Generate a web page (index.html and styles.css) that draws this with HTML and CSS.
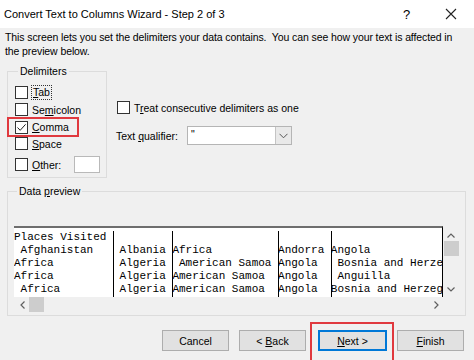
FILE: index.html
```html
<!DOCTYPE html>
<html lang="en">
<head>
  <meta charset="UTF-8" />
  <title>Convert Text to Columns Wizard - Step 2 of 3</title>
  <link rel="stylesheet" href="styles.css">
</head>
<body>

  <div class="window">
    <!-- Title bar -->
    <div class="titlebar">
      <span class="title">Convert Text to Columns Wizard - Step 2 of 3</span>
      <span class="help">?</span>
      <span class="close">
        <svg width="12" height="12" viewBox="0 0 12 12"><path d="M1 1 L11 11 M11 1 L1 11" stroke="#222" stroke-width="1.1" fill="none"/></svg>
      </span>
    </div>

    <div class="content">
      <p class="intro">This screen lets you set the delimiters your data contains.&nbsp; You can see how your text is affected in<br>the preview below.</p>

      <div class="options">
        <fieldset class="group delimiters">
          <legend>Delimiters</legend>
          <label class="check"><span class="box"></span><span class="focus"><u>T</u>ab</span></label>
          <label class="check"><span class="box"></span><span>Se<u>m</u>icolon</span></label>
          <div class="highlight">
            <label class="check"><span class="box"><svg width="11" height="11" viewBox="0 0 11 11"><path d="M1.5 5.5 L4.2 8.3 L9.6 2.3" stroke="#222" stroke-width="1" fill="none"/></svg></span><span><u>C</u>omma</span></label>
          </div>
          <label class="check"><span class="box"></span><span><u>S</u>pace</span></label>
          <div class="check other">
            <span class="box"></span><span class="other-label"><u>O</u>ther:</span>
            <span class="other-input"></span>
          </div>
        </fieldset>

        <div class="side">
          <label class="check"><span class="box"></span><span>T<u>r</u>eat consecutive delimiters as one</span></label>
          <div class="qualifier">
            <span>Text <u>q</u>ualifier:</span>
            <div class="combo">
              <span class="combo-value">"</span>
              <span class="combo-btn">
                <svg width="9" height="6" viewBox="0 0 9 6"><path d="M0.5 0.8 L4.5 4.8 L8.5 0.8" stroke="#555" stroke-width="1" fill="none"/></svg>
              </span>
            </div>
          </div>
        </div>
      </div>

      <fieldset class="group preview-group">
        <legend>Data <u>p</u>review</legend>
        <div class="preview">
          <div class="preview-row">
            <div class="grid">
              <div class="col c1">Places Visited
 Afghanistan
Africa
Africa
 Africa</div>
              <div class="col c2">
 Albania
 Algeria
 Algeria
 Algeria</div>
              <div class="col c3">
Africa
 American Samoa
American Samoa
American Samoa</div>
              <div class="col c4">
Andorra
Angola
Angola
Angola</div>
              <div class="col c5">
Angola
 Bosnia and Herzegovina
 Anguilla
Bosnia and Herzegovina</div>
            </div>
            <div class="vscroll">
              <svg width="8" height="5" viewBox="0 0 8 5"><path d="M0.5 4.5 L4 1 L7.5 4.5" stroke="#606060" stroke-width="1.2" fill="none"/></svg>
              <span class="vthumb"></span>
              <span class="spacer"></span>
              <svg width="8" height="5" viewBox="0 0 8 5"><path d="M0.5 0.5 L4 4 L7.5 0.5" stroke="#606060" stroke-width="1.2" fill="none"/></svg>
            </div>
          </div>
          <div class="hscroll">
            <svg width="5" height="8" viewBox="0 0 5 8"><path d="M4.5 0.5 L1 4 L4.5 7.5" stroke="#606060" stroke-width="1.2" fill="none"/></svg>
            <span class="hthumb"></span>
            <span class="spacer"></span>
            <svg width="5" height="8" viewBox="0 0 5 8"><path d="M0.5 0.5 L4 4 L0.5 7.5" stroke="#606060" stroke-width="1.2" fill="none"/></svg>
          </div>
        </div>
      </fieldset>

      <div class="buttons">
        <button class="btn">Cancel</button>
        <button class="btn">&lt; <u>B</u>ack</button>
        <div class="next-wrap">
          <button class="btn default"><u>N</u>ext &gt;</button>
        </div>
        <button class="btn"><u>F</u>inish</button>
      </div>
    </div>
  </div>

</body>
</html>
```

FILE: styles.css
```css
* {
  box-sizing: border-box;
  margin: 0;
  padding: 0;
}

body {
  font-family: 'Liberation Sans', sans-serif;
  font-size: 10.5px;
  color: #000;
  width: 474px;
  height: 360px;
  overflow: hidden;
  background: #f0f0f0;
}

/* title bar */
.titlebar {
  background: #fff;
  height: 28px;
  display: flex;
  align-items: center;
  padding-left: 4px;
}

.title {
  font-size: 11px;
  flex: 1;
}

.help {
  font-size: 13px;
  width: 14px;
  margin-right: 28px;
}

.close {
  display: flex;
  margin-right: 17px;
}

/* body */
.intro {
  padding: 2px 5px 0;
  line-height: 14px;
  letter-spacing: -0.1px;
}

.options {
  display: flex;
  margin-top: 6px;
}

.group {
  border: 1px solid #dcdcdc;
  margin-left: 7px;
}

.group legend {
  line-height: 14px;
  margin-left: 3px;
  padding: 0 2px;
}

.delimiters {
  width: 100px;
  padding: 6px 6px 4px 7px;
}

.check {
  display: flex;
  align-items: center;
  height: 17px;
  gap: 4px;
}

.box {
  width: 13px;
  height: 13px;
  border: 1px solid #333;
  background: #fff;
  display: flex;
  align-items: center;
  justify-content: center;
  flex: none;
}

.focus {
  outline: 1px dotted #333;
  padding: 0 1px;
  line-height: 13px;
}

.highlight {
  display: flex;
  align-items: center;
  width: 72px;
  height: 20px;
  border: 2px solid #e0393e;
  margin: -1px 0 -2px -8px;
  padding-left: 6px;
}

.other {
  margin-top: 4px;
}

.other-label {
  width: 38px;
}

.other-input {
  width: 26px;
  height: 17px;
  background: #fff;
  border: 1px solid #b9b9b9;
}

.side {
  margin-left: 10px;
  padding-top: 35px;
}

.qualifier {
  display: flex;
  align-items: center;
  gap: 9px;
  margin-top: 10px;
  margin-left: -1px;
}

.combo {
  display: flex;
  width: 105px;
  height: 19px;
  border: 1px solid #b5b5b5;
  background: #fff;
}

.combo-value {
  flex: 1;
  padding-left: 3px;
  line-height: 14px;
}

.combo-btn {
  width: 16px;
  background: #e9e9e9;
  border-left: 1px solid #c4c4c4;
  display: flex;
  align-items: center;
  justify-content: center;
}

/* data preview */
.preview-group {
  margin-top: 6px;
  width: 459px;
  padding: 28px 6px 3px 6px;
}

.preview {
  display: flex;
  flex-direction: column;
}

.preview-row {
  display: flex;
  height: 71px;
}

.grid {
  flex: 1;
  display: grid;
  grid-template-columns: 15ch 9ch 16ch 8ch 1fr;
  background: #fff;
  border-top: 2px solid #6e6e6e;
  border-right: 1px solid #000;
  overflow: hidden;
  font-family: 'Liberation Mono', monospace;
  font-size: 11px;
  line-height: 13px;
  padding-top: 3px;
}

.col {
  white-space: pre;
  overflow: hidden;
}

.c2, .c3, .c4, .c5 {
  box-shadow: inset 1px 0 #000;
}

.vscroll {
  width: 16px;
  display: flex;
  flex-direction: column;
  align-items: center;
  padding: 7px 0 5px;
}

.vthumb {
  width: 15px;
  height: 15px;
  background: #cdcdcd;
  margin-top: 3px;
}

.spacer {
  flex: 1;
}

.hscroll {
  height: 15px;
  width: 429px;
  display: flex;
  align-items: center;
  padding: 0 4px 0 6px;
}

.hthumb {
  width: 15px;
  height: 15px;
  background: #cdcdcd;
  margin-left: 4px;
}

/* buttons */
.buttons {
  display: flex;
  align-items: flex-start;
  margin-top: 14px;
  padding-left: 162px;
}

.btn {
  font-family: 'Liberation Sans', sans-serif;
  font-size: 10.5px;
  width: 68px;
  height: 21px;
  background: #e1e1e1;
  border: 1px solid #adadad;
  color: #000;
  margin-right: 10px;
}

.next-wrap {
  border: 2px solid #e0393e;
  padding: 6px 5px 10px 6px;
  margin: -8px 3px 0 -6px;
}

.btn.default {
  border: 2px solid #0078d7;
  margin-right: 0;
  width: 69px;
}
```
